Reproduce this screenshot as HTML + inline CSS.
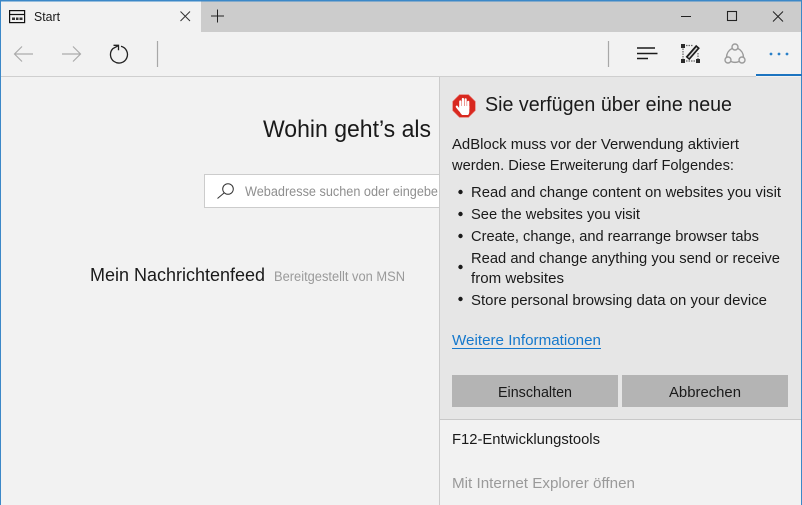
<!DOCTYPE html>
<html><head><meta charset="utf-8"><style>
html,body{margin:0;padding:0;width:802px;height:505px;overflow:hidden;background:#f2f2f2}
svg{display:block}
text{font-family:"Liberation Sans",sans-serif;fill:#1a1a1a}
</style></head><body>
<svg width="802" height="505" viewBox="0 0 802 505" xmlns="http://www.w3.org/2000/svg">
<rect width="802" height="505" fill="#f2f2f2"/>
<!-- tab strip -->
<rect x="201" y="1" width="601" height="31" fill="#cccccc"/>
<!-- window border -->
<rect x="0" y="0" width="802" height="1.5" fill="#3b88c8"/>
<rect x="0" y="0" width="1" height="505" fill="#3b88c8"/>
<rect x="801" y="0" width="1" height="505" fill="#3b88c8"/>
<!-- tab icon -->
<g fill="none" stroke="#111" stroke-width="1.200"><rect x="9.600" y="10.600" width="15" height="12"/><path d="M10 14.500h14"/></g>
<path d="M12 17.500h3v2.500h-3zM16 17.500h2.500v2.500h-2.500zM19.500 17.500h3v2.500h-3z" fill="#333"/>
<text x="34" y="21" font-size="13" textLength="26" lengthAdjust="spacingAndGlyphs">Start</text>
<path d="M180.500 11.500l9.500 9.500M190 11.500l-9.500 9.500" stroke="#333" stroke-width="1" fill="none"/>
<path d="M217.500 9.500v13M211 16h13" stroke="#222" stroke-width="1" fill="none"/>
<!-- window controls -->
<path d="M681 16.500h10" stroke="#222" stroke-width="1"/>
<rect x="727.500" y="11.500" width="9" height="9" fill="none" stroke="#222" stroke-width="1.100"/>
<path d="M773 11.500l10 10M783 11.500l-10 10" stroke="#222" stroke-width="1" fill="none"/>
<!-- nav -->
<path d="M33 54H15M22 46.500L14.500 54l7.500 7.500" fill="none" stroke="#ababab" stroke-width="1.200"/>
<path d="M62 54h18M73 46.500l7.500 7.500-7.500 7.500" fill="none" stroke="#ababab" stroke-width="1.200"/>
<path d="M121 46.300A8.500 8.500 0 1 1 113 48.500L118 45.800" fill="none" stroke="#222" stroke-width="1.300"/>
<path d="M113.500 45.300h5v5" fill="none" stroke="#222" stroke-width="1.300"/>
<path d="M157.500 41v26" stroke="#a8a8a8" stroke-width="1.200"/>
<path d="M608.500 41v26" stroke="#a8a8a8" stroke-width="1.200"/>
<!-- hub -->
<path d="M637 48h18M637 53.500h20.500M637 58.500h11" stroke="#1a1a1a" stroke-width="1.400" fill="none"/>
<!-- note icon -->
<g fill="#2a2a2a"><rect x="681" y="44" width="4" height="4"/><rect x="681" y="59" width="4" height="4"/><rect x="696" y="59" width="4" height="4"/></g>
<path d="M683 48.500v10.500M686 45.500h7M686 61h9.500M698 53v6" stroke="#666" stroke-width="1.200" stroke-dasharray="1.500 1" fill="none"/>
<path d="M687.500 58.500L698 46.500" stroke="#1a1a1a" stroke-width="5" fill="none"/>
<path d="M688.500 57.500L697 47.800" stroke="#d8d8d8" stroke-width="1.500" fill="none"/>
<!-- share -->
<g fill="none" stroke="#9a9a9a" stroke-width="1.400"><circle cx="735" cy="47" r="3"/><circle cx="728" cy="60" r="3"/><circle cx="742" cy="60" r="3"/><path d="M732 48.500a10 10 0 0 0-5.500 8.800M738 48.500a10 10 0 0 1 5.500 8.800M731 61.500a10 10 0 0 0 8 0"/></g>
<!-- more -->
<g fill="#2a80c8"><circle cx="771" cy="54" r="1.400"/><circle cx="779" cy="54" r="1.400"/><circle cx="787" cy="54" r="1.400"/></g>
<!-- toolbar line -->
<rect x="1" y="76" width="800" height="1" fill="#cfcfcf"/>
<rect x="756" y="74" width="46" height="2.200" fill="#1c74c0"/>
<!-- page content -->
<text x="263" y="137" font-size="24" textLength="168" lengthAdjust="spacingAndGlyphs">Wohin geht’s als</text>
<rect x="204.500" y="174.500" width="240" height="33" fill="#fff" stroke="#cccccc"/>
<g fill="none" stroke="#333" stroke-width="1"><circle cx="228" cy="189" r="5.300"/><path d="M224 193l-6.500 5.500"/></g>
<text x="245" y="196" font-size="13.500" style="fill:#8f8f8f" textLength="193" lengthAdjust="spacingAndGlyphs">Webadresse suchen oder eingebe</text>
<text x="90" y="281" font-size="18.500" textLength="175" lengthAdjust="spacingAndGlyphs">Mein Nachrichtenfeed</text>
<text x="274" y="281" font-size="13.500" style="fill:#9a9a9a" textLength="131" lengthAdjust="spacingAndGlyphs">Bereitgestellt von MSN</text>
<!-- panel -->
<rect x="439" y="76" width="363" height="429" fill="#f2f2f2"/>
<rect x="439" y="77" width="362" height="342" fill="#e6e6e6"/>
<rect x="439" y="76" width="1" height="429" fill="#cbcbcb"/>
<rect x="439" y="76" width="317" height="1" fill="#cfcfcf"/>
<rect x="440" y="419" width="361" height="1" fill="#c8c8c8"/>
<rect x="801" y="76" width="1" height="429" fill="#3b88c8"/>
<!-- adblock logo -->
<path d="M459.500 94.700h9l6.800 6.800v9l-6.800 6.800h-9l-6.800-6.800v-9z" fill="#d8281f" stroke="#e8726a" stroke-width=".6"/>
<g stroke="#fff" stroke-width="2.200" stroke-linecap="round" fill="none"><path d="M460.300 101.500v7M462.900 99v9M465.600 99.300v9M468.200 101.800v7M459.800 110.500l-3-3.800"/></g>
<path d="M459.300 106h10v5.500c0 1.500-.5 2.700-1.200 3.500h-6c-1.200-1-2.100-2.500-2.800-4z" fill="#fff"/>
<text x="485" y="111" font-size="20.500" textLength="247" lengthAdjust="spacingAndGlyphs">Sie verfügen über eine neue</text>
<text x="452" y="149" font-size="15" textLength="287" lengthAdjust="spacingAndGlyphs">AdBlock muss vor der Verwendung aktiviert</text>
<text x="452" y="170" font-size="15" textLength="282" lengthAdjust="spacingAndGlyphs">werden. Diese Erweiterung darf Folgendes:</text>
<text x="471" y="197" font-size="15" textLength="310" lengthAdjust="spacingAndGlyphs">Read and change content on websites you visit</text>
<text x="471" y="219" font-size="15" textLength="169" lengthAdjust="spacingAndGlyphs">See the websites you visit</text>
<text x="471" y="241" font-size="15" textLength="288" lengthAdjust="spacingAndGlyphs">Create, change, and rearrange browser tabs</text>
<text x="471" y="263" font-size="15" textLength="309" lengthAdjust="spacingAndGlyphs">Read and change anything you send or receive</text>
<text x="471" y="283" font-size="15" textLength="93" lengthAdjust="spacingAndGlyphs">from websites</text>
<text x="471" y="305" font-size="15" textLength="296" lengthAdjust="spacingAndGlyphs">Store personal browsing data on your device</text>
<g fill="#1a1a1a"><circle cx="460.500" cy="192" r="2.200"/><circle cx="460.500" cy="214" r="2.200"/><circle cx="460.500" cy="236" r="2.200"/><circle cx="460.500" cy="267" r="2.200"/><circle cx="460.500" cy="299" r="2.200"/></g>
<text x="452" y="345" font-size="15" style="fill:#1578cc" textLength="149" lengthAdjust="spacingAndGlyphs">Weitere Informationen</text>
<rect x="452" y="348" width="149" height="1" fill="#1578cc"/>
<rect x="452" y="375" width="166" height="32" fill="#b4b4b4"/>
<rect x="622" y="375" width="166" height="32" fill="#b4b4b4"/>
<text x="498" y="397" font-size="15" textLength="74" lengthAdjust="spacingAndGlyphs">Einschalten</text>
<text x="669" y="397" font-size="15" textLength="72" lengthAdjust="spacingAndGlyphs">Abbrechen</text>
<text x="452" y="444" font-size="15" textLength="148" lengthAdjust="spacingAndGlyphs">F12-Entwicklungstools</text>
<text x="452" y="488" font-size="15" style="fill:#9a9a9a" textLength="183" lengthAdjust="spacingAndGlyphs">Mit Internet Explorer öffnen</text>
</svg>
</body></html>
